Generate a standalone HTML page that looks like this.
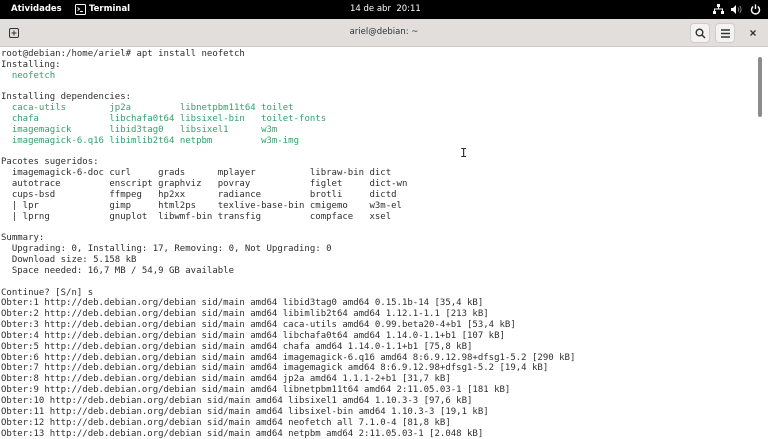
<!DOCTYPE html>
<html><head><meta charset="utf-8"><style>
*{margin:0;padding:0;box-sizing:border-box}
body{width:768px;height:432px;overflow:hidden;background:#fff;font-family:"DejaVu Sans","Liberation Sans",sans-serif;position:relative}
#top{position:absolute;left:0;top:0;width:768px;height:19px;background:#000;color:#fff;font-size:8.5px;font-weight:bold}
#top span{position:absolute;top:4px}
#hdr{position:absolute;left:0;top:19px;width:768px;height:28px;background:#e1dedb;border-bottom:1px solid #cfcac5}
.btn{position:absolute;top:4px;width:20px;height:20px;border-radius:4px;background:#f4f3f2;border:1px solid #d0ccc8}
#title{position:absolute;top:8px;left:0;width:768px;text-align:center;font-size:8.5px;color:#2e3436}
pre{position:absolute;left:1px;top:49px;font-family:"DejaVu Sans Mono","Liberation Mono",monospace;font-size:9px;line-height:10.85px;color:#2e2e2e}
.g{color:#2ea46c}
#sb{position:absolute;left:758px;top:57px;width:4px;height:60px;background:#8c8c8c;border-radius:2px}
</style></head><body>
<div id="top">
<span style="left:11px">Atividades</span>
<svg style="position:absolute;left:75px;top:4px" width="11" height="11" viewBox="0 0 11 11"><rect x="0.5" y="0.5" width="10" height="10" rx="1" fill="none" stroke="#fff"/><path d="M2.5 3.5l2 1.5-2 1.5M5 7.5h3" stroke="#fff" fill="none"/></svg>
<span style="left:89px">Terminal</span>
<span style="left:350px;font-weight:normal">14 de abr&nbsp; 20:11</span>
<svg style="position:absolute;left:713px;top:4px" width="11" height="11" viewBox="0 0 11 11" fill="#fff"><rect x="4" y="0" width="3" height="3"/><rect x="0" y="7" width="3" height="3"/><rect x="8" y="7" width="3" height="3"/><path d="M5.5 3v2M1.5 7V5h8v2" stroke="#fff" fill="none"/></svg>
<svg style="position:absolute;left:731px;top:4px" width="11" height="11" viewBox="0 0 11 11"><path d="M0 4h2l3-3v9l-3-3H0z" fill="#fff"/><path d="M7 3.5q1.5 2 0 4M8.8 2q2.5 3.5 0 7" stroke="#888" fill="none"/></svg>
<svg style="position:absolute;left:750px;top:4px" width="11" height="11" viewBox="0 0 11 11"><path d="M3.2 2.6A4 4 0 1 0 7.8 2.6" stroke="#fff" stroke-width="1.4" fill="none"/><path d="M5.5 0.5v4.5" stroke="#fff" stroke-width="1.4"/></svg>
</div>
<div id="hdr">
<div class="btn" style="left:4px;background:#e1dedb;border:none"><svg style="position:absolute;left:5px;top:5px" width="10" height="10" viewBox="0 0 10 10"><rect x="0.5" y="0.5" width="9" height="9" rx="1.5" fill="none" stroke="#2e3436"/><path d="M5 2.5v5M2.5 5h5" stroke="#2e3436"/></svg></div>
<div id="title">ariel@debian: ~</div>
<div class="btn" style="left:690px"><svg style="position:absolute;left:4px;top:4px" width="11" height="11" viewBox="0 0 11 11"><circle cx="4.5" cy="4.5" r="3.3" fill="none" stroke="#2e3436" stroke-width="1.4"/><path d="M7 7l3 3" stroke="#2e3436" stroke-width="1.5"/></svg></div>
<div class="btn" style="left:715px"><svg style="position:absolute;left:4px;top:5px" width="11" height="9" viewBox="0 0 11 9"><path d="M1 1h9M1 4.5h9M1 8h9" stroke="#2e3436" stroke-width="1.4"/></svg></div>
<svg style="position:absolute;left:749px;top:10px" width="8" height="8" viewBox="0 0 8 8"><path d="M1.5 1.5l5 5M6.5 1.5l-5 5" stroke="#2e3436" stroke-width="1.3"/></svg>
</div>
<pre>root@debian:/home/ariel# apt install neofetch
Installing:
  <span class="g">neofetch</span>

Installing dependencies:
  <span class="g">caca-utils        jp2a         libnetpbm11t64 toilet</span>
  <span class="g">chafa             libchafa0t64 libsixel-bin   toilet-fonts</span>
  <span class="g">imagemagick       libid3tag0   libsixel1      w3m</span>
  <span class="g">imagemagick-6.q16 libimlib2t64 netpbm         w3m-img</span>

Pacotes sugeridos:
  imagemagick-6-doc curl     grads      mplayer          libraw-bin dict
  autotrace         enscript graphviz   povray           figlet     dict-wn
  cups-bsd          ffmpeg   hp2xx      radiance         brotli     dictd
  | lpr             gimp     html2ps    texlive-base-bin cmigemo    w3m-el
  | lprng           gnuplot  libwmf-bin transfig         compface   xsel

Summary:
  Upgrading: 0, Installing: 17, Removing: 0, Not Upgrading: 0
  Download size: 5.158 kB
  Space needed: 16,7 MB / 54,9 GB available

Continue? [S/n] s
Obter:1 http://deb.debian.org/debian sid/main amd64 libid3tag0 amd64 0.15.1b-14 [35,4 kB]
Obter:2 http://deb.debian.org/debian sid/main amd64 libimlib2t64 amd64 1.12.1-1.1 [213 kB]
Obter:3 http://deb.debian.org/debian sid/main amd64 caca-utils amd64 0.99.beta20-4+b1 [53,4 kB]
Obter:4 http://deb.debian.org/debian sid/main amd64 libchafa0t64 amd64 1.14.0-1.1+b1 [107 kB]
Obter:5 http://deb.debian.org/debian sid/main amd64 chafa amd64 1.14.0-1.1+b1 [75,8 kB]
Obter:6 http://deb.debian.org/debian sid/main amd64 imagemagick-6.q16 amd64 8:6.9.12.98+dfsg1-5.2 [290 kB]
Obter:7 http://deb.debian.org/debian sid/main amd64 imagemagick amd64 8:6.9.12.98+dfsg1-5.2 [19,4 kB]
Obter:8 http://deb.debian.org/debian sid/main amd64 jp2a amd64 1.1.1-2+b1 [31,7 kB]
Obter:9 http://deb.debian.org/debian sid/main amd64 libnetpbm11t64 amd64 2:11.05.03-1 [181 kB]
Obter:10 http://deb.debian.org/debian sid/main amd64 libsixel1 amd64 1.10.3-3 [97,6 kB]
Obter:11 http://deb.debian.org/debian sid/main amd64 libsixel-bin amd64 1.10.3-3 [19,1 kB]
Obter:12 http://deb.debian.org/debian sid/main amd64 neofetch all 7.1.0-4 [81,8 kB]
Obter:13 http://deb.debian.org/debian sid/main amd64 netpbm amd64 2:11.05.03-1 [2.048 kB]</pre>
<div id="sb"></div>
<div style="position:absolute;left:460px;top:147px;font-family:'DejaVu Sans Mono',monospace;font-size:12px;color:#333;line-height:12px">I</div>
</body></html>
